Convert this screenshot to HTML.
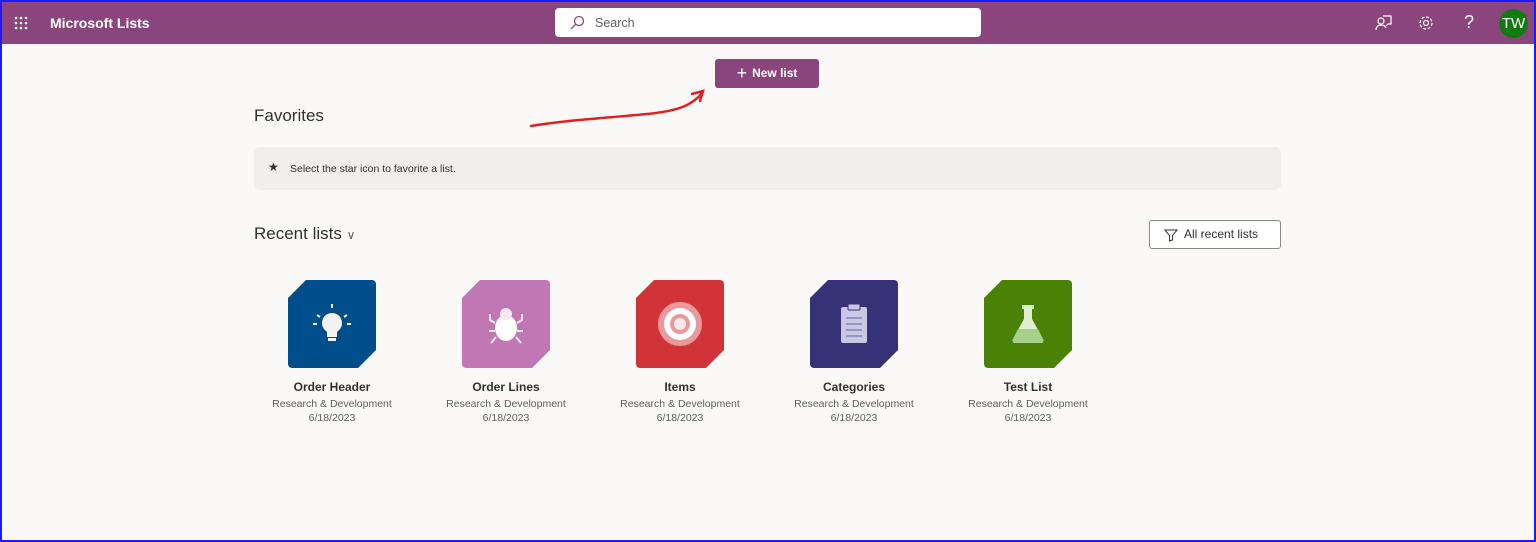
<!DOCTYPE html>
<html><head><style>
*{box-sizing:border-box;margin:0;padding:0}
body{width:1536px;height:542px;overflow:hidden;background:#faf9f8;font-family:"Liberation Sans",sans-serif;position:relative;border:2px solid #1a1aff}
.top{position:absolute;left:0;top:0;width:1532px;height:42px;background:#8a457c}
.abs{position:absolute}
.tile{position:absolute;top:278px;width:174px;text-align:center}
.ic{width:88px;height:88px;margin:0 auto;clip-path:polygon(18px 0,100% 0,100% 70px,70px 100%,0 100%,0 18px);border-radius:4px;display:flex;align-items:center;justify-content:center}
.t1{font-size:12px;font-weight:bold;color:#323130;margin-top:12px}
.t2{font-size:10.5px;color:#605e5c;margin-top:3px;line-height:14px}
</style></head><body>
<div class="top">
 <svg class="abs" style="left:12px;top:14px" width="14" height="14"><g fill="#fff"><circle cx="2" cy="2" r="1.3"/><circle cx="7" cy="2" r="1.3"/><circle cx="12" cy="2" r="1.3"/><circle cx="2" cy="7" r="1.3"/><circle cx="7" cy="7" r="1.3"/><circle cx="12" cy="7" r="1.3"/><circle cx="2" cy="12" r="1.3"/><circle cx="7" cy="12" r="1.3"/><circle cx="12" cy="12" r="1.3"/></g></svg>
 <div class="abs" style="left:48px;top:13px;color:#fff;font-size:14px;font-weight:bold">Microsoft Lists</div>
 <div class="abs" style="left:553px;top:6px;width:426px;height:29px;background:#fff;border-radius:4px">
  <svg class="abs" style="left:14px;top:7px" width="16" height="16"><circle cx="10" cy="6" r="4.5" fill="none" stroke="#8a457c" stroke-width="1.3"/><path d="M6.8 9.2 2 14" stroke="#8a457c" stroke-width="1.3"/></svg>
  <div class="abs" style="left:40px;top:8px;font-size:12.5px;color:#605e5c">Search</div>
 </div>
 <svg class="abs" style="left:1373px;top:12px" width="18" height="18" fill="none" stroke="#fff" stroke-width="1.2"><circle cx="6" cy="7" r="3"/><path d="M1 16c0-3 2-5 5-5s4 1 5 3M8 2h8v8h-3l-2 2"/></svg>
 <svg class="abs" style="left:1415px;top:12px" width="18" height="18" fill="none" stroke="#fff" stroke-width="1.2"><circle cx="9" cy="9" r="2.5"/><circle cx="9" cy="9" r="6" stroke-dasharray="3 1.7"/></svg>
 <div class="abs" style="left:1462px;top:10px;color:#fff;font-size:18px">?</div>
 <div class="abs" style="left:1497px;top:7px;width:29px;height:29px;border-radius:50%;background:#107c10;color:#fff;font-size:15px;text-align:center;line-height:29px">TW</div>
</div>
<div class="abs" style="left:713px;top:57px;width:104px;height:29px;background:#8a457c;border-radius:3px;color:#fff;font-size:12px;font-weight:bold;line-height:29px;text-align:center"><span style="font-weight:normal;font-size:18px;vertical-align:-2px;margin-right:5px">+</span>New list</div>
<svg class="abs" style="left:525px;top:82px" width="180" height="48"><path d="M4 42C40 36 80 34 120 30C150 27 165 22 176 8M165 10l11-3-3 10" fill="none" stroke="#e02020" stroke-width="2.5" stroke-linecap="round"/></svg>
<div class="abs" style="left:252px;top:104px;font-size:17px;color:#323130">Favorites</div>
<div class="abs" style="left:252px;top:145px;width:1027px;height:43px;background:#f0efee;border-radius:6px">
 <div class="abs" style="left:14px;top:13px;font-size:12px;color:#323130">★</div>
 <div class="abs" style="left:36px;top:16px;font-size:10.5px;color:#323130">Select the star icon to favorite a list.</div>
</div>
<div class="abs" style="left:252px;top:222px;font-size:17px;color:#323130">Recent lists <span style="font-size:12px;color:#605e5c">&#8744;</span></div>
<div class="abs" style="left:1147px;top:218px;width:132px;height:29px;border:1px solid #8a8886;border-radius:3px;background:#fff;font-size:12px;color:#323130;line-height:27px;padding-left:34px">All recent lists
 <svg class="abs" style="left:14px;top:7px" width="14" height="14"><path d="M1 2h12L8.5 7.5V12L5.5 13V7.5Z" fill="none" stroke="#323130"/></svg></div>

<div class="tile" style="left:243px"><div class="ic" style="background:#004e8c"><svg width="50" height="50" fill="#f3f2f1"><circle cx="25" cy="24" r="10"/><rect x="20" y="30" width="10" height="8"/><rect x="21" y="39" width="8" height="3"/><g stroke="#f3f2f1" stroke-width="2"><path d="M25 5v4M10 16l3 2M40 16l-3 2M6 25h4M40 25h4"/></g></svg></div><div class="t1">Order Header</div><div class="t2">Research &amp; Development<br>6/18/2023</div></div>
<div class="tile" style="left:417px"><div class="ic" style="background:#c177b4"><svg width="50" height="50" fill="#fff"><ellipse cx="25" cy="29" rx="11" ry="13"/><circle cx="25" cy="15" r="6" fill="#f5e8f2"/><g stroke="#f5e8f2" stroke-width="2" fill="none"><path d="M14 24l-5-3v-6M36 24l5-3v-6M14 32H8M36 32h6M15 38l-5 6M35 38l5 6"/></g></svg></div><div class="t1">Order Lines</div><div class="t2">Research &amp; Development<br>6/18/2023</div></div>
<div class="tile" style="left:591px"><div class="ic" style="background:#d13438"><svg width="50" height="50"><circle cx="25" cy="25" r="22" fill="#e8999b"/><circle cx="25" cy="25" r="16" fill="#fff"/><circle cx="25" cy="25" r="10" fill="#e8999b"/><circle cx="25" cy="25" r="6" fill="#fbe9e9"/></svg></div><div class="t1">Items</div><div class="t2">Research &amp; Development<br>6/18/2023</div></div>
<div class="tile" style="left:765px"><div class="ic" style="background:#373277"><svg width="50" height="50"><rect x="12" y="8" width="26" height="36" rx="2" fill="#c9c7e4"/><rect x="19" y="5" width="12" height="6" rx="1" fill="#c9c7e4" stroke="#373277"/><g stroke="#8683b8" stroke-width="1.5"><path d="M17 19h16M17 25h16M17 31h16M17 37h16"/></g></svg></div><div class="t1">Categories</div><div class="t2">Research &amp; Development<br>6/18/2023</div></div>
<div class="tile" style="left:939px"><div class="ic" style="background:#498205"><svg width="50" height="50"><path d="M19 6h12v4h-2v10l11 20c1 2 0 4-2 4H12c-2 0-3-2-2-4l11-20V10h-2z" fill="#dff0d0"/><path d="M15 30h20l5 10c1 2 0 4-2 4H12c-2 0-3-2-2-4z" fill="#a6cf8c"/></svg></div><div class="t1">Test List</div><div class="t2">Research &amp; Development<br>6/18/2023</div></div>
</body></html>
